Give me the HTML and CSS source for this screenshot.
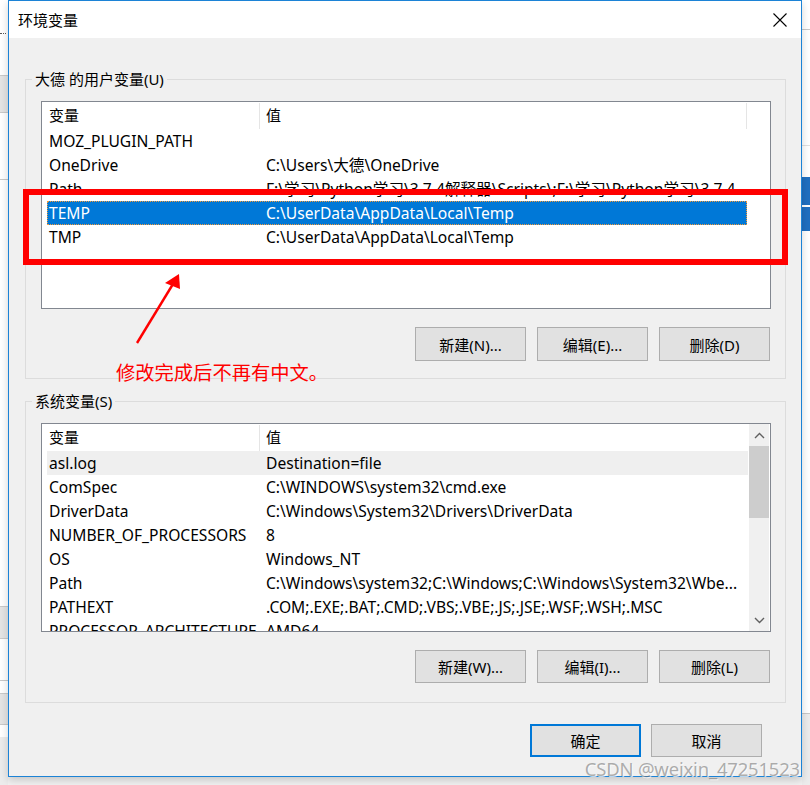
FILE: index.html
```html
<!DOCTYPE html>
<html lang="zh-CN">
<head>
<meta charset="utf-8">
<title>环境变量</title>
<link rel="stylesheet" href="styles.css">
</head>
<body>
<div class="desk">
  <div class="side side-left">
    <div class="sp h33"></div>
    <div class="dots"></div>
    <div class="sp h39"></div>
    <div class="band h38"></div>
    <div class="sp h66"></div>
    <div class="hline"></div>
    <div class="sp h426"></div>
    <div class="band h33"></div>
    <div class="sp h41"></div>
    <div class="hline"></div>
    <div class="sp h12"></div>
    <div class="band h32"></div>
    <div class="sp h12"></div>
    <div class="fill"></div>
  </div>

  <div class="window">
    <div class="titlebar">
      <span class="title">环境变量</span>
      <svg class="close" width="14" height="14" viewBox="0 0 14 14"><path d="M0.5 0.5 L13.5 13.5 M13.5 0.5 L0.5 13.5" stroke="#000" stroke-width="1.1" fill="none"/></svg>
    </div>

    <div class="client">
      <div class="group g1">
        <div class="group-title">大德 的用户变量(U)</div>
        <div class="list l1">
          <div class="list-body">
            <div class="lhead"><div class="hc1">变量</div><div class="hc2 divr">值</div></div>
            <div class="row"><div class="c1">MOZ_PLUGIN_PATH</div><div class="c2"></div></div>
            <div class="row"><div class="c1">OneDrive</div><div class="c2">C:\Users\大德\OneDrive</div></div>
            <div class="row"><div class="c1">Path</div><div class="c2">F:\学习\Python学习\3.7.4解释器\Scripts\;F:\学习\Python学习\3.7.4</div></div>
            <div class="row sel"><div class="c1">TEMP</div><div class="c2">C:\UserData\AppData\Local\Temp</div></div>
            <div class="row"><div class="c1">TMP</div><div class="c2">C:\UserData\AppData\Local\Temp</div></div>
          </div>
        </div>
        <div class="btnrow r1">
          <button class="btn">新建(N)...</button>
          <button class="btn">编辑(E)...</button>
          <button class="btn">删除(D)</button>
        </div>
      </div>

      <div class="group g2">
        <div class="group-title">系统变量(S)</div>
        <div class="list l2">
          <div class="list-body">
            <div class="lhead"><div class="hc1">变量</div><div class="hc2">值</div></div>
            <div class="row hover"><div class="c1">asl.log</div><div class="c2">Destination=file</div></div>
            <div class="row"><div class="c1">ComSpec</div><div class="c2">C:\WINDOWS\system32\cmd.exe</div></div>
            <div class="row"><div class="c1">DriverData</div><div class="c2">C:\Windows\System32\Drivers\DriverData</div></div>
            <div class="row"><div class="c1">NUMBER_OF_PROCESSORS</div><div class="c2">8</div></div>
            <div class="row"><div class="c1">OS</div><div class="c2">Windows_NT</div></div>
            <div class="row"><div class="c1">Path</div><div class="c2">C:\Windows\system32;C:\Windows;C:\Windows\System32\Wbe...</div></div>
            <div class="row"><div class="c1">PATHEXT</div><div class="c2">.COM;.EXE;.BAT;.CMD;.VBS;.VBE;.JS;.JSE;.WSF;.WSH;.MSC</div></div>
            <div class="row"><div class="c1">PROCESSOR_ARCHITECTURE</div><div class="c2">AMD64</div></div>
          </div>
          <div class="scrollbar">
            <div class="sb-btn"><svg width="11" height="7" viewBox="0 0 11 7"><path d="M1 6 L5.5 1.5 L10 6" stroke="#606060" stroke-width="1.4" fill="none"/></svg></div>
            <div class="sb-thumb"></div>
            <div class="sb-track"></div>
            <div class="sb-btn"><svg width="11" height="7" viewBox="0 0 11 7"><path d="M1 1 L5.5 5.5 L10 1" stroke="#606060" stroke-width="1.4" fill="none"/></svg></div>
          </div>
        </div>
        <div class="btnrow r2">
          <button class="btn">新建(W)...</button>
          <button class="btn">编辑(I)...</button>
          <button class="btn">删除(L)</button>
        </div>
      </div>

      <div class="dlgbtns">
        <button class="btn default">确定</button>
        <button class="btn">取消</button>
      </div>
    </div>

    <svg class="annot" width="792" height="775" viewBox="0 0 792 775">
      <rect x="17" y="191" width="759" height="70" fill="none" stroke="#ff0000" stroke-width="6"/>
      <line x1="128" y1="342" x2="164" y2="283" stroke="#ff0000" stroke-width="2.4"/>
      <polygon points="170,273 156,282 171,288" fill="#ff0000"/>
    </svg>
    <div class="note">修改完成后不再有中文。</div>
    <div class="watermark">CSDN @weixin_47251523</div>
  </div>

  <div class="side side-right">
    <div class="sp h29"></div>
    <div class="hline"></div>
    <div class="sp h115"></div>
    <div class="hline light"></div>
    <div class="sp h31"></div>
    <div class="blue h28"></div>
    <div class="sp h2"></div>
    <div class="blue h24"></div>
    <div class="sp h482"></div>
    <div class="hline"></div>
    <div class="fill"></div>
  </div>
</div>
</body>
</html>
```
FILE: styles.css
```css
* { box-sizing: border-box; }
html, body { margin: 0; padding: 0; }
body {
  width: 810px;
  height: 785px;
  overflow: hidden;
  background: #f1f1f1;
  font-family: "Noto Sans", "Noto Sans CJK SC", sans-serif;
  font-size: 15px;
  color: #000;
}
.desk { display: flex; align-items: flex-start; }

/* desktop strips around the window */
.side { width: 8px; height: 785px; background: #fff; display: flex; flex-direction: column; }
.sp { flex: none; }
.h2 { height: 2px; } .h12 { height: 12px; } .h24 { height: 24px; } .h28 { height: 28px; }
.h29 { height: 29px; } .h31 { height: 31px; } .h32 { height: 32px; } .h33 { height: 33px; }
.h38 { height: 38px; } .h39 { height: 39px; } .h41 { height: 41px; } .h66 { height: 66px; }
.h115 { height: 115px; } .h426 { height: 426px; } .h482 { height: 482px; }
.dots { height: 3px; margin-right: 2px; border-top: 1px dotted #555; }
.band { flex: none; background: #e4e4e4; border-top: 1px solid #c9c9c9; border-bottom: 1px solid #c9c9c9; }
.hline { flex: none; height: 1px; background: #c8c8c8; }
.hline.light { background: #e0e0e0; }
.blue { flex: none; background: #1f6fc0; }
.fill { flex: 1; background: #ececec; }

/* window */
.window {
  width: 794px;
  height: 777px;
  border: 1px solid #1c83d6;
  background: #f0f0f0;
  position: relative;
  display: flex;
  flex-direction: column;
  box-shadow: 0 3px 8px rgba(0, 0, 0, 0.18);
}
.titlebar {
  height: 37px;
  background: #fff;
  display: flex;
  align-items: center;
  justify-content: space-between;
  padding: 0 14px 0 9px;
}
.title { font-family: "Noto Sans CJK SC", sans-serif; font-size: 15px; line-height: 20px; }
.close { display: block; }

.client {
  flex: 1;
  display: flex;
  flex-direction: column;
  padding: 0 15px 0 16px;
}

.group {
  border: 1px solid #dcdcdc;
  padding: 0 14px 17px 15px;
}
.g1 { margin-top: 41px; }
.g2 { margin-top: 22px; padding-bottom: 19px; }
.group-title {
  width: max-content;
  height: 20px;
  line-height: 20px;
  margin: -11px 0 0 -9px;
  padding: 0 3px;
  background: #f0f0f0;
}

.list {
  margin-top: 12px;
  height: 208px;
  border: 1px solid #828790;
  background: #fff;
  overflow: hidden;
  display: flex;
}
.l2 { height: 209px; }
.list-body { padding-left: 5px; flex: none; }
.l1 .list-body { width: 705px; }
.l2 .list-body { width: 706px; }
.lhead { display: flex; height: 27px; padding-top: 1px; }
.hc1 { width: 213px; padding-left: 2px; line-height: 25px; border-right: 1px solid #e5e5e5; }
.hc2 { flex: 1; padding-left: 6px; line-height: 25px; }
.hc2.divr { border-right: 1px solid #e5e5e5; }
.row { display: flex; height: 24px; line-height: 24px; white-space: nowrap; font-size: 15.6px; }
.c1 { width: 213px; padding-left: 2px; flex: none; overflow: hidden; }
.c2 { flex: 1; padding-left: 6px; overflow: hidden; }
.row.sel { background: #0078d7; color: #fff; outline: 1px dotted #f39a3a; outline-offset: -1px; }
.row.hover { background: #efefef; }

.scrollbar {
  width: 20px;
  margin-left: 1px;
  background: #f0f0f0;
  display: flex;
  flex-direction: column;
}
.sb-btn { height: 22px; display: flex; align-items: center; justify-content: center; flex: none; }
.sb-thumb { height: 72px; background: #cdcdcd; flex: none; }
.sb-track { flex: 1; }

.btnrow { display: flex; justify-content: flex-end; gap: 11px; margin-top: 18px; padding-right: 1px; }
.btn {
  width: 111px;
  height: 34px;
  margin: 0;
  padding: 0;
  border: 1px solid #adadad;
  background: #e1e1e1;
  font-family: "Noto Sans", "Noto Sans CJK SC", sans-serif;
  font-size: 15px;
  color: #000;
}
.r2 .btn { height: 33px; }
.btn.default { border: 2px solid #0078d7; }

.dlgbtns { display: flex; justify-content: flex-end; gap: 10px; margin-top: 21px; padding-right: 24px; }
.dlgbtns .btn { height: 33px; }

/* annotations drawn over the dialog */
.annot { position: absolute; left: 0; top: 0; pointer-events: none; }
.note {
  position: absolute;
  left: 107px;
  top: 359px;
  font-family: "Noto Sans CJK SC", sans-serif;
  font-size: 19.3px;
  line-height: 24px;
  color: #ff0000;
  white-space: nowrap;
}
.watermark {
  position: absolute;
  right: 1px;
  bottom: -4px;
  font-family: "Noto Sans", sans-serif;
  font-size: 18.5px;
  line-height: 22px;
  letter-spacing: -0.2px;
  color: rgba(110, 110, 110, 0.55);
  text-shadow: 1px 1px 0 rgba(255, 255, 255, 0.7);
  white-space: nowrap;
}
```
